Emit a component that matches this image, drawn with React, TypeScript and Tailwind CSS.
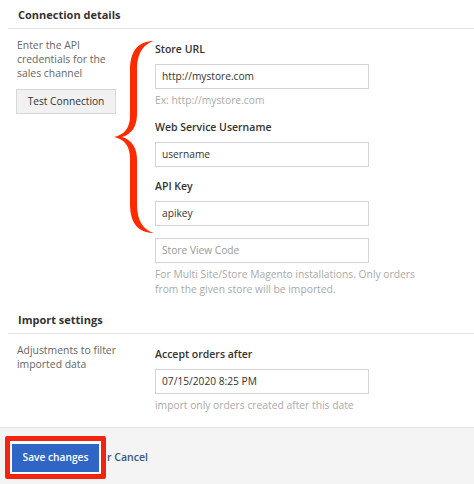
import React from 'react';

const font = { fontFamily: '"Open Sans", "Liberation Sans", sans-serif' };

const Brace: React.FC = () => (
  <svg
    className="absolute left-[113px] top-[9px]"
    width="44"
    height="198"
    viewBox="0 0 44 198"
  >
    <path
      d="M41 3 C26 3 17 12 17 32 L17 78 C17 90 11 97 1 99 C11 101 17 108 17 120 L17 166 C17 186 26 195 41 195 C31 192 24 184 24 166 L24 122 C24 110 19 102 9 99 C19 96 24 88 24 76 L24 32 C24 14 31 6 41 3 Z"
      fill="#ff2a00"
    />
  </svg>
);

interface FieldProps {
  label?: string;
  value?: string;
  placeholder?: string;
  hint?: string;
}

const Field: React.FC<FieldProps> = ({ label, value, placeholder, hint }) => (
  <div className="flex flex-col">
    {label && <div className="text-[10.5px] font-semibold leading-[16px] text-[#333] mb-[7px]">{label}</div>}
    <div className="w-[214px] h-[25px] border border-[#d4d4d4] bg-white flex items-center px-[6px] text-[10.2px]">
      {value ? <span className="text-[#333]">{value}</span> : <span className="text-[#999]">{placeholder}</span>}
    </div>
    {hint && <div className="text-[10.3px] leading-[15px] text-[#aaa] mt-[4px] w-[270px]">{hint}</div>}
  </div>
);

const SectionHeading: React.FC<{ title: string }> = ({ title }) => (
  <div className="ml-2 border-b border-[#e4e4e4] pl-[10px] pt-[6px] pb-[5px] text-[11px] font-bold leading-[17px] text-[#333]">
    {title}
  </div>
);

export default function App() {
  return (
    <div className="w-[474px] h-[484px] bg-white flex flex-col overflow-hidden" style={font}>
      <SectionHeading title="Connection details" />
      <div className="relative flex pt-[9px] pb-[8px]">
        <div className="w-[155px] pl-[17px] shrink-0">
          <p className="w-[110px] text-[10.4px] leading-[14px] text-[#666]">
            Enter the API credentials for the sales channel
          </p>
          <button className="mt-[9px] h-[25px] w-[100px] -ml-px border border-[#d8d8d8] bg-[#f1f1f1] text-[10.2px] text-[#333]">
            Test Connection
          </button>
        </div>
        <div className="flex flex-col gap-[11px] pt-[3px]">
          <Field label="Store URL" value="http://mystore.com" hint="Ex: http://mystore.com" />
          <Field label="Web Service Username" value="username" />
          <Field label="API Key" value="apikey" />
          <div className="mt-px">
            <Field
              placeholder="Store View Code"
              hint="For Multi Site/Store Magento installations. Only orders from the given store will be imported."
            />
          </div>
        </div>
        <Brace />
      </div>

      <SectionHeading title="Import settings" />
      <div className="flex pt-[9px] pb-[14px]">
        <div className="w-[155px] pl-[17px] shrink-0">
          <p className="w-[110px] text-[10.4px] leading-[14px] text-[#666]">Adjustments to filter imported data</p>
        </div>
        <div className="pt-[3px]">
          <Field
            label="Accept orders after"
            value="07/15/2020 8:25 PM"
            hint="import only orders created after this date"
          />
        </div>
      </div>

      <div className="flex-1 bg-[#f4f4f4] border-t border-[#e6e6e6] pt-[8px] pl-[5px] flex items-start">
        <div className="border-[5px] border-[#f2230f] rounded-[2px] bg-white p-[2px]">
          <button className="h-[28px] w-[87px] bg-[#2f66c6] text-white text-[10.2px] font-semibold">
            Save changes
          </button>
        </div>
        <span className="mt-[14px] ml-px text-[10.5px] font-semibold text-[#3b5683]">r Cancel</span>
      </div>
    </div>
  );
}
